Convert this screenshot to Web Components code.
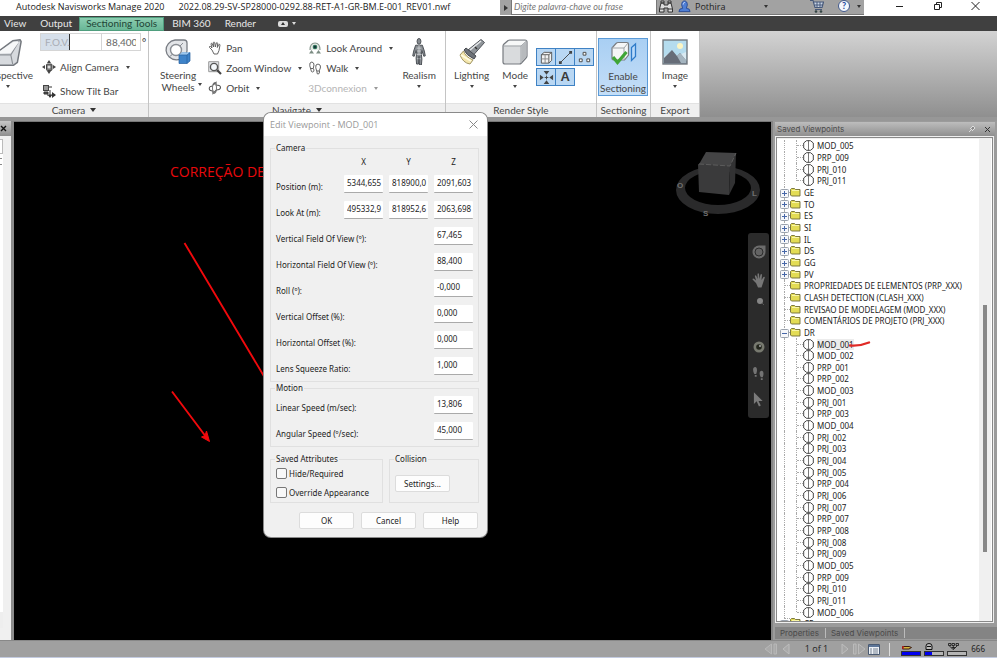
<!DOCTYPE html>
<html lang="pt">
<head>
<meta charset="utf-8">
<title>Autodesk Navisworks Manage 2020</title>
<style>
html,body{margin:0;height:100%}
body{font:10px/12px Lato,"Open Sans",sans-serif;color:#464646;background:#a0a0a0;overflow:hidden}
</style>
</head>
<body>
<nw-app></nw-app>
<script>
const ICONS={
perspective:['0 0 32 28','<path d="M1 17 21 2l8-1 1 2-4 22-4 3H3l-2-4z" fill="#d7dade" stroke="#74787e" stroke-width="1.6" stroke-linejoin="round"/><path d="M2 17h17l9-15M19 17l2 10" fill="none" stroke="#8d9197" stroke-width="1.2"/><path d="M3 16 22 3h6l-9 12z" fill="#f6f7f8"/>'],
align:['0 0 14 14','<rect x="4.500" y="4" width="5.500" height="6.500" rx="1" fill="#777" stroke="#444"/><circle cx="7" cy="7" r="1.500" fill="#ddd"/><path d="M7 0 9 3H5zM7 14l-2-3h4zM0 7l3-2v4zM14 7l-3 2V5z" fill="#444"/>'],
tilt:['0 0 14 14','<rect x="1.500" y="1.500" width="5" height="5" fill="#999" stroke="#444"/><path d="M2 8h4v2H2zM7 3h3M8 6v7M5 11h8" stroke="#333" fill="#555"/><path d="m10 8 4 3-4 3zM8 14l-2-3h4z" fill="#333"/>'],
wheel:['0 0 26 26','<path d="M10 1h9q3 0 3 3v8a10.500 10 0 1 1-12-11z" fill="#e3e5e8" stroke="#787c83" stroke-width="1.300"/><circle cx="11" cy="11" r="5.500" fill="#fff" stroke="#8a8e94" stroke-width="1.400"/><path d="M4 18l4-3M18 4l-3 3" stroke="#8a8e94"/><path d="m14 16 3-2.500h8V22l-3 2.500h-8z" fill="#3e83c9"/><path d="m14 16 3-2.500h8L22 16z" fill="#9cc7ef"/><path d="M22 16h-8v8.500h8V16l3-2.500V22l-3 2.500" fill="none" stroke="#225f9f" stroke-width=".7"/>'],
pan:['0 0 14 14','<path d="M4 9 1.500 6.500q-.5-1.500 1-1L4 7 3 3q.3-1.500 1.300-.3L5.500 6 5.300 1.500q.7-1.300 1.400 0L7.300 6l1-4q1-1 1.400.2L9.300 6.500l1.500-3q1-.7 1.200.5L11 9.500 9.500 13H6z" fill="#fff" stroke="#555" stroke-width=".9"/>'],
zoom:['0 0 14 14','<path d="M.7.700h10v10h-10z" fill="#e3e6e9" stroke="#999"/><circle cx="6" cy="6" r="3.600" fill="#f4f8fb" stroke="#555" stroke-width="1.400"/><path d="m9 9 4 4" stroke="#444" stroke-width="2.200"/>'],
orbit:['0 0 14 14','<path d="M5 4 8 1.500V4c6 0 6 5 0 5M5 5C0 5 0 10 5 10v2.500L8.500 9" fill="none" stroke="#555" stroke-width="1.100"/><ellipse cx="6.500" cy="7" rx="2" ry="5.500" fill="none" stroke="#777"/>'],
look:['0 0 14 14','<path d="M2 9q0-7 5-7t5 7" fill="#e5ebe7" stroke="#8a9a90" stroke-width="1.200"/><circle cx="7" cy="6" r="2.300" fill="#2e7358"/><circle cx="7" cy="6" r="1" fill="#123"/><path d="M1 12.500 3.500 9 6 12.500zM8 12.500 10.500 9l2.500 3.500z" fill="#7d8d84"/>'],
walk:['0 0 14 14','<path d="M2 2q2-2 3.500 0Q6.500 4 5.500 6 5 8 6 9q0 2-1.500 2T3 9Q1 4 2 2zM8 4q2-2 4 0 1 2 0 4-1 1-.5 3 0 2-1.500 2T9 11Q7 6 8 4z" fill="#fff" stroke="#666"/><path d="M2.500 7.500H5M9 10h2.500" stroke="#666"/>'],
realism:['0 0 16 28','<path d="M6 3.500q0-3 2-3t2 3-2 3-2-3zM4.500 7.500h7l2 6 1 5-1.500.5-2-6-.5 4 .5 5-.5 6H8.500L8 19l-.5 8H5.500L5 21l.5-5L5 13l-2 6-1.500-.5 1-5z" fill="#868b90" stroke="#4a4e53"/><path d="M5.500 10.500h5M6 13.500h4M5.500 17h5M6 21.500h1.500M8.500 21.500H10M8 7v10" stroke="#d5d8db" stroke-width=".8"/>'],
lighting:['0 0 28 28','<path d="M10 12 23 1.500l3.500 3L15.500 17z" fill="#8f9499" stroke="#50545a"/><path d="m12 12 11-9" stroke="#e6e8ea" stroke-width="1.600"/><path d="m8 10 10 8-2 3Q8 17 6 12z" fill="#6d7278" stroke="#484b50"/><path d="M5.500 13q2 6 9.500 9l-3 4Q5 25 2 17z" fill="#f5e7ad" stroke="#a09565"/><path d="m3 17 10 6" stroke="#fffbe0" stroke-width="2"/><path d="m17 9 2 2" stroke="#333" stroke-width="1.500"/>'],
mode:['0 0 26 26','<path d="M1 7q0-1 1-2l4-3.500Q7 1 8 1h15q2 0 2 2v14q0 1-1 2l-4.500 5q-1 1-2 1H3q-2 0-2-2z" fill="#d9dbdd" stroke="#777b80" stroke-width="1.200"/><path d="M2 6.500 7 2h17l-5 4.500z" fill="#f7f8f8"/><path d="M2 7h17v17M19 7l5.500-5" fill="none" stroke="#a2a6aa"/><path d="m19.500 7 5-4.500V17l-5 6z" fill="#b7babd"/>'],
t1:['0 0 16 16','<path d="m2.500 5 3-2.500h8V11l-3 3h-8zM2.500 5h8v9M10.500 5l3-2.500" fill="#f2f2f2" stroke="#555"/><path d="M2.500 9.500h8M6.500 5v9" stroke="#888"/>'],
t2:['0 0 16 16','<path d="M2.500 13.500 13.500 2.500" stroke="#444"/><path d="M1 12h3v3H1zM12 1h3v3h-3z" fill="#444"/>'],
t3:['0 0 16 16','<path d="M6.500 2.500h3v3h-3zM2.500 9.500h3v3h-3zM10.500 9.500h3v3h-3z" fill="#fff" stroke="#444"/>'],
t4:['0 0 16 16','<path d="M5 1h6L8 5zM5 15h6l-3-4zM1 5l4 3-4 3zM15 5l-4 3 4 3z" fill="#444"/><path d="M8 6v4M6 8h4" stroke="#444"/>'],
section:['0 0 28 26','<path d="M3 8 7 3.500q1-1 2-1h9q1.500 0 1.500 1.500v11l-4 5H4.500Q3 20 3 18.500z" fill="#f5f6f7" stroke="#7a7e83" stroke-width="1.200"/><path d="M3 8h12v11M15 8l4-5" fill="none" stroke="#a0a4a8"/><path d="M22.500 7.500 26.500 4v12.500l-4 4z" fill="#b9dafa" stroke="#2e7bc9" stroke-width="1.300"/><path d="m4 17 4.500 5.500L17.500 12" fill="none" stroke="#3fa535" stroke-width="3.200"/>'],
image:['0 0 26 26','<rect x="1" y="1" width="24" height="24" fill="#b5dcee" stroke="#74797f" stroke-width="1.400"/><circle cx="18" cy="7" r="3" fill="#fdf6c4"/><path d="M2 18q6-6 9-3t13-2v11H2z" fill="#d9eaf2"/><path d="m2 19 8-8 5 6 3-3 6.500 8v2.500H2z" fill="#676d78"/><path d="m15 17 3-3 6 7v3h-5z" fill="#a5b5c0"/>'],
binoc:['0 0 14 13','<path d="M2 3h3v2h4V3h3l1.500 6v3H9V8H5v4H.5V9zM2 1h3v2H2zM9 1h3v2H9z" fill="#ddd" stroke="#333"/><path d="M1 9h4M9 9h4" stroke="#333"/>'],
user:['0 0 14 14','<path d="M1 12.500Q1 9 5 9L4 5.500Q4 1 7 1t3 4.500L9 9q4 0 4 3.500z" fill="#4f7fd6" stroke="#274a94"/><path d="M5.500 5q0-2.500 2-2.500" stroke="#bcd2fa" fill="none"/>'],
cart:['0 0 14 14','<path d="M0 1.500h3L5 8.500h7L13.500 3H4" fill="#c9d5e6" stroke="#47597a" stroke-width="1.200"/><path d="M5 6h8M5 10.500h7M7 3v5M10 3v5" stroke="#47597a"/><circle cx="6" cy="12.500" r="1.300" fill="#344"/><circle cx="11" cy="12.500" r="1.300" fill="#344"/>'],
folder:['0 0 11 9','<path d="M.5 1.500 1.500.500h3l1 1h4.500v6.500H1.500L.5 7z" fill="#e3dc55" stroke="#6f6c35" stroke-width=".9"/><path d="M2 2.500h7" stroke="#f8f5a8"/>'],
view:['0 0 11 11','<path d="M3.500.7h4L10.300 3v5L7.500 10.300h-4L.7 8V3z" fill="#fff" stroke="#333" stroke-width=".9"/><path d="M5.500 0v11" stroke="#555" stroke-width=".8"/>'],
plus:['0 0 9 9','<rect x=".5" y=".5" width="8" height="8" rx="1" fill="#f6f7fa" stroke="#9ba3ae"/><path d="M2 4.500h5M4.500 2v5" stroke="#4667a8"/>'],
minus:['0 0 9 9','<rect x=".5" y=".5" width="8" height="8" rx="1" fill="#f6f7fa" stroke="#9ba3ae"/><path d="M2 4.500h5" stroke="#4667a8"/>'],
nwheel:['0 0 14 14','<path d="M7 .5h6.500V7A6.500 6.500 0 1 1 7 .5z" fill="#6c6c6c"/><circle cx="7" cy="7" r="4" fill="#646464" stroke="#2c2c2c"/>'],
nhand:['0 0 14 15','<path d="M4 10 .5 6.500q0-1.500 1.500-.7L4 7.500 2.800 3q.5-1.500 1.500-.2L5.700 6 5.500 1q.8-1.300 1.500 0L7.500 6l1-4.500q1-1 1.500.3L9.500 7l2-3q1.200-.7 1.300.6L11 10l-1.500 4.500H6z" fill="#777"/>'],
nzoom:['0 0 10 10','<circle cx="6" cy="5" r="3" fill="#858585"/><path d="m8 7 2 2" stroke="#555"/>'],
neye:['0 0 14 14','<circle cx="7" cy="7" r="5.500" fill="#77796f"/><circle cx="7" cy="7" r="2.800" fill="#23261d"/><circle cx="8" cy="6" r="1" fill="#aaa"/>'],
nfeet:['0 0 14 16','<path d="M1.500 2q2-2 3.500 0 1 3-.5 6.500H2.500Q.5 5 1.500 2zM8.500 6q2-2 3.500 0 1 3-.5 6h-2Q7.500 9 8.500 6zM3 9.500h2v2H3zM9.500 13h2v2h-2z" fill="#747474"/>'],
narrow:['0 0 12 16','<path d="M1 0v13l3-3 2.500 5.500 2-1L6 9.500h4.500z" fill="#7b7b7b"/>'],
first:['0 0 14 12','<path d="M7.500 1v10L1 6zM10 1h2.500v10H10z" fill="#a9a9a9" stroke="#b8b8b8"/>'],
prev:['0 0 8 12','<path d="M7 1v10L1 6z" fill="#a9a9a9" stroke="#bdbdbd"/>'],
next:['0 0 8 12','<path d="M1 1v10l6-5z" fill="#a6a6a6" stroke="#bdbdbd"/>'],
last:['0 0 14 12','<path d="M6.500 1v10L13 6zM1.500 1H4v10H1.500z" fill="#a6a6a6" stroke="#bbb"/>'],
sheet:['0 0 12 11','<path d="M.5.500h11v10H.5z" fill="#eef2f7" stroke="#4a5a72"/><path d="M1 2h10" stroke="#5d7699" stroke-width="2"/><path d="M2 5h2M2 7h2M2 9h2M5 5h5M5 7h5M5 9h5" stroke="#56657a" stroke-width=".8"/>'],
pencil:['0 0 10 5','<path d="M.5 1.500h6.500l2.500 1-2.500 1.500H.5z" fill="#d7b93e" stroke="#3b1b10"/><path d="M1 1v3" stroke="#b22" stroke-width="1.500"/>'],
disk:['0 0 8 7','<path d="M1 3q0-2.500 3-2.500T7 3v3.500H1z" fill="#bbb" stroke="#111"/><path d="M2 3.500h4" stroke="#111"/>'],
net:['0 0 11 7','<path d="M.5.500h2.500v2H.5zM4 .5h2.500v2H4zM8 .5h2.500v2H8zM1.500 3 5 6.500M5.300 3v3.500M9 3 5.500 6.500M3.500 4.500h4" fill="none" stroke="#111" stroke-width=".8"/>'],
};
function ic(n,w,h){const i=ICONS[n];return `<svg aria-hidden="true" width="${w}" height="${h||w}" viewBox="${i[0]}">${i[1]}</svg>`}
const BASE=`*{box-sizing:border-box}svg{display:block;flex:none}button,input{font:inherit;color:inherit;margin:0}button{background:none;border:0;padding:0;white-space:nowrap}`;
function define(name,css,html){
  const t=document.createElement('template');
  t.innerHTML=`<style>${BASE}${css}</style>`;
  customElements.define(name,class extends HTMLElement{
    constructor(){super();const r=this.attachShadow({mode:'open'});r.append(t.content.cloneNode(true));}
    connectedCallback(){if(this.done)return;this.done=true;const d=document.createElement('template');d.innerHTML=typeof html==='function'?html(this):html;this.shadowRoot.append(d.content);}
  });
}

/* Ribbon button: "big" puts the icon above the label, otherwise beside it. */
define('nw-tool',`
:host{display:block}
button{display:flex;align-items:center;gap:4px;height:20px;line-height:12px}
.car{width:0;height:0;border:2px solid transparent;border-top:3px solid #444;border-bottom:0;margin-left:3px}
:host([big]) button{flex-direction:column;height:auto;gap:4px;padding:2px 2px 3px;min-width:38px}
:host([big]) .ic{height:27px;display:flex;align-items:center}
:host([big]) .car{margin:0}
:host([on]) button{background:linear-gradient(#a9cff3,#c4def7);border:1px solid #5b9bd8;width:50px;height:58px;padding-top:1px}
:host([off]) button{color:#b5b5b5}
:host([off]) .car{border-top-color:#999}`,
e=>{const n=e.getAttribute('icon');return `<button type="button">${n?`<span class="ic">${ic(n,+e.getAttribute('w')||14,+e.getAttribute('h')||+e.getAttribute('w')||14)}</span>`:''}<span><slot></slot></span>${e.hasAttribute('menu')?'<i class="car"></i>':''}</button>`});

define('nw-panel',`
:host{display:flex;flex-direction:column;border-right:1px solid #c4c4c4;background:#fff;flex:none}
.body{flex:1;display:flex;padding:5px 0 0}
.cap{height:14px;line-height:12px;padding-bottom:1px;background:#efefef;border-top:1px solid #e2e2e2;display:flex;justify-content:center;align-items:center;gap:5px}
.cap i{border:3px solid transparent;border-top:4px solid #333;border-bottom:0}`,
e=>`<div class="body"><slot></slot></div><div class="cap">${e.getAttribute('label')}${e.hasAttribute('menu')?'<i></i>':''}</div>`);

define('nw-titlebar',`
:host{display:flex;align-items:stretch;height:16px;background:#fff;color:#222;font:9px/13px "Open Sans",sans-serif}
h1{font:inherit;margin:0 0 0 16px;flex:1;display:flex;gap:14px;white-space:nowrap}
.exp{width:11px;height:15px;background:#a2a2a2;display:flex;align-items:center;justify-content:center}
.exp i{border:3px solid transparent;border-left:4px solid #333;border-right:0}
input{width:146px;height:15px;border:1px solid #777;border-top:0;font:italic 9px/12px Lato,sans-serif;padding:0 2px 2px;background:#fff}
input::placeholder{color:#777;opacity:1}
.acc{height:15px;width:207px;background:#a2a2a2;display:flex;align-items:center;padding:0 3px 2px 2px;border-bottom:1px solid #777}
.acc span{margin-left:4px;flex:0 0 69px}.acc i{border:2px solid transparent;border-top:3px solid #333;border-bottom:0}
.q{width:12px;height:12px;border-radius:6px;background:#f4f7fc;border:1px solid #41598c;color:#23489c;font:bold 9px/10px Lato,sans-serif;text-align:center}
.win{width:133px;display:flex;justify-content:space-between;align-items:flex-start;padding:1px 17px 0 31px}`,
`<h1><span>Autodesk Navisworks Manage 2020</span><span>2022.08.29-SV-SP28000-0292.88-RET-A1-GR-BM.E-001_REV01.nwf</span></h1>
<div class="exp"><i></i></div><input type="text" aria-label="Pesquisa" placeholder="Digite palavra-chave ou frase">
<div class="acc">${ic('binoc',14,13)}<b style="width:5px"></b>${ic('user',13)}<span>Pothira</span><i></i><b style="flex:1"></b>${ic('cart',14)}<b style="width:14px"></b><button class="q" aria-label="Ajuda">?</button><b style="width:7px"></b><i></i></div>
<div class="win"><button aria-label="Minimizar"><svg width="9" height="10" viewBox="0 0 9 10"><path d="M1 5.500h7" stroke="#222"/></svg></button>
<button aria-label="Restaurar"><svg width="9" height="10" viewBox="0 0 9 10"><path d="M1.500 3.500h5v5h-5zM3.500 3V1.500h5v5H7" fill="none" stroke="#222"/></svg></button>
<button aria-label="Fechar"><svg width="9" height="10" viewBox="0 0 9 10"><path d="m.5 1 8 8M8.500 1l-8 8" stroke="#222"/></svg></button></div>`);

define('nw-tabs',`
:host{display:flex;align-items:center;height:15px;background:#404040;color:#e8e8e8;padding:0 0 0 4px}
button{height:14px;line-height:13px;margin-right:14px}
button[aria-selected=true]{background:linear-gradient(#8fcfb3,#66b594);color:#1e4536;padding:0 7px;margin:0 8px 0 -7px;outline:1px solid #4f9e7e;outline-offset:-1px}
.m{background:#ddd;width:10px;height:6px;border-radius:2px;display:block;margin-left:8px}
.m i{display:block;width:0;border:2px solid transparent;border-bottom:3px solid #333;border-top:0;margin:1px auto 0}
.c{border:2px solid transparent;border-top:3px solid #ddd;border-bottom:0;margin-left:4px}`,
`<button>View</button><button>Output</button><button aria-selected="true">Sectioning Tools</button><button>BIM 360</button><button>Render</button><span class="m"><i></i></span><i class="c"></i>`);

define('nw-ribbon',`
:host{display:flex;height:86px;background:linear-gradient(#d3d3d3,#8f8f8f)}
.col{display:flex;flex-direction:column}
.p1{width:149px}.p2{width:297px}.p3{width:151px}.p4{width:54px}.p5{width:49px}
.persp{margin-left:-20px;margin-right:7px}
.fov{display:flex;height:18px;margin:-4px 0 6px -2px;align-items:center;color:#666}
.fov input{height:18px;border:1px solid #d5d5d5;padding:0 4px;background:#fff}
.fov .a{width:62px;color:#a9adb5;background:linear-gradient(90deg,#d6dfea 28px,#333 28px 29px,#fff 29px)}
.fov .b{width:39px;border-left:0;padding:0 4px}
.g{display:grid;grid-template-columns:19px 19px 19px;grid-auto-rows:18px;row-gap:2px;margin:12px 0 0 2px;height:38px}
.g button{border:1px solid #3f82c4;background:#b9d7f3;display:grid;place-items:center;margin-right:-1px;font:bold 13px/14px "Liberation Sans",sans-serif;color:#3a3a3a}
.w{display:flex;align-items:flex-start}
.w i{border:2px solid transparent;border-top:3px solid #444;border-bottom:0;margin:47px -3px 0 0}`,
`<nw-panel class="p1" label="Camera" menu><nw-tool class="persp" big menu icon="perspective" w="30" h="28">Perspective</nw-tool>
<div class="col" style="padding-top:1px"><div class="fov"><input class="a" aria-label="Campo" value="F.O.V."><input class="b" aria-label="F.O.V." value="88,400"><span style="margin-left:1px;color:#222">°</span></div>
<nw-tool icon="align" menu>Align Camera</nw-tool><b style="height:4px"></b><nw-tool icon="tilt">Show Tilt Bar</nw-tool></div></nw-panel>
<nw-panel class="p2" label="Navigate" menu><div class="w"><nw-tool style="margin-left:9px" big icon="wheel" w="26">Steering<br>Wheels</nw-tool><i></i></div>
<div class="col" style="padding:2px 0 0 9px;width:109px"><nw-tool icon="pan">Pan</nw-tool><nw-tool icon="zoom" menu>Zoom Window</nw-tool><nw-tool icon="orbit" menu>Orbit</nw-tool></div>
<div class="col" style="padding:2px 0 0 0;width:91px"><nw-tool icon="look" menu>Look Around</nw-tool><nw-tool icon="walk" menu>Walk</nw-tool><nw-tool off menu>3Dconnexion</nw-tool></div>
<nw-tool style="margin-left:1px" big menu icon="realism" w="16" h="27">Realism</nw-tool></nw-panel>
<nw-panel class="p3" label="Render Style"><nw-tool style="margin-left:6px" big menu icon="lighting" w="28">Lighting</nw-tool><nw-tool style="margin-left:5px" big menu icon="mode" w="26">Mode</nw-tool>
<div class="g"><button aria-label="Surfaces">${ic('t1',15)}</button><button aria-label="Lines">${ic('t2',15)}</button><button aria-label="Points">${ic('t3',15)}</button><button aria-label="Snap Points">${ic('t4',15)}</button><button aria-label="Text">A</button></div></nw-panel>
<nw-panel class="p4" label="Sectioning"><nw-tool style="margin:2px 0 0 1px" big on icon="section" w="28" h="26">Enable<br>Sectioning</nw-tool></nw-panel>
<nw-panel class="p5" label="Export"><nw-tool style="margin:0 auto" big menu icon="image" w="26">Image</nw-tool></nw-panel>`);

define('nw-leftdock',`
:host{display:flex;flex-direction:column;width:14px;background:#f0f0f0;border-right:3px solid #8c8c8c}
.h{height:15px;background:linear-gradient(#c6c6c6,#8e8e8e);display:flex;align-items:center}
.b{width:3px;flex:1;display:flex;flex-direction:column;background:#fff;margin:3px 0 12px}
.b i{display:block}`,
`<div class="h"><button aria-label="Fechar painel"><svg width="7" height="7" viewBox="0 0 7 7"><path d="m1 1 5 5M6 1 1 6" stroke="#111" stroke-width="1.400"/></svg></button></div>
<div class="b"><i style="height:15px;border:1px solid #bbb;border-left:0"></i><i style="height:4px"></i><i style="height:7px;border:solid #888;border-width:1px 0;width:2px"></i><b style="flex:1"></b><i style="height:16px;background:#eee"></i></div>`);

define('nw-navbar',`
:host{display:flex;flex-direction:column;align-items:center;width:21px;background:#2b2b2b;border-radius:3px;padding:12px 0 11px}`,
`${ic('nwheel',14)}<b style="height:14px"></b>${ic('nhand',14,15)}<b style="height:8px"></b>${ic('nzoom',10)}<b style="height:34px"></b>${ic('neye',14)}<b style="height:12px"></b>${ic('nfeet',13,15)}<b style="height:11px"></b>${ic('narrow',11,15)}`);

define('nw-viewport',`
:host{display:block;position:relative;flex:1;background:#000;overflow:hidden;border-top:1px solid #777}
.mark{position:absolute;left:0;top:0}
.note{position:absolute;left:156px;top:40px;font:14px/20px "Open Sans",sans-serif;color:#e8090c;white-space:nowrap;margin:0}
.cube{position:absolute;right:8px;top:25px}
nw-navbar{position:absolute;right:2px;top:111px}`,
`<p class="note">CORREÇÃO DE</p>
<svg class="mark" width="260" height="340" viewBox="0 0 260 340" fill="none" stroke="#f0090c" stroke-width="1.900"><path d="m170.500 121 85 142.500M158 269.500l36 48"/><path d="m195.500 319.500-8-4.500 3.500-1.500 1.500-4.500z" fill="#f0090c" stroke="#f0090c" stroke-width="1"/></svg>
<svg class="cube" width="90" height="70" viewBox="0 0 90 70"><path fill-rule="evenodd" d="M3 43a42 24 0 1 1 84 0 42 24 0 1 1-84 0zm9-2a33 17 0 1 0 66 0 33 17 0 1 0-66 0z" fill="#2a2a2b"/><path d="m33 5 30 1-3 14-35-1z" fill="#444445"/><path d="m25 17 32 2-1 29-30-3z" fill="#3a3a3b"/><path d="M57 19 63 6l-1 30-6 12z" fill="#323233"/><path d="m26 17 31 2 6-13" stroke="#5c5c5c" fill="none" stroke-dasharray="5 2"/><g fill="#707070" font-family="Liberation Sans" font-size="8" font-weight="bold"><text x="4" y="41">O</text><text x="79" y="49">L</text><text x="30" y="69">S</text></g></svg>
<nw-navbar></nw-navbar>`);

const kids=["MOD_001","MOD_002","PRP_001","PRP_002","MOD_003","PRJ_001","PRP_003","MOD_004","PRJ_002","PRJ_003","PRJ_004","PRJ_005","PRP_004","PRJ_006","PRJ_007","PRP_007","PRP_008","PRJ_008","PRJ_009","MOD_005","PRP_009","PRJ_010","PRJ_011","MOD_006"];
const leaf=(t,i,a)=>`<li class="l2${i===a.length-1?' end':''}"><i class="v"></i><i class="v w"></i><i class="h"></i>${ic('view',11)}<span class="${t==='MOD_001'?'sel':''}">${t}${t==='MOD_001'?'<svg class="pen" width="22" height="7" viewBox="0 0 22 7"><path d="M1 4.500q9 1 19-3" fill="none" stroke="#e02a26" stroke-width="2.300" stroke-linecap="round"/></svg>':''}</span></li>`;
const dir=(t,x)=>`<li class="l1"><i class="v"></i><i class="h"></i>${x?`<em>${ic(x,9)}</em>`:''}${ic('folder',11,9)}<span>${t}</span></li>`;

define('nw-saved',`
:host{display:flex;flex-direction:column;width:226px;background:#9b9b9b;border-left:2px solid #858585;padding:1px 0 0 2px;font:8px/11px "Noto Sans","DejaVu Sans Condensed",sans-serif;color:#222}
header{height:14px;background:linear-gradient(#bdbdbd,#8f8f8f);display:flex;align-items:center;gap:8px;padding:0 4px 0 2px;margin-right:2px;color:#4c4c4c;font-family:Inter,sans-serif}
header span{flex:1}
.box{flex:1;display:flex;background:#fff;border:2px solid #efefef;border-top-width:3px;margin-right:3px;outline:1px solid #888;outline-offset:-2px;padding:0 1px 0 1px;min-height:0}
ul{list-style:none;margin:0;padding:1px 0 0;flex:1;display:grid;grid-template-rows:repeat(41,1fr) 3px;min-height:0}
li{display:flex;align-items:center;min-height:0;position:relative;padding-left:6px;white-space:nowrap}
li:last-child{overflow:hidden;align-items:flex-start}
.v{align-self:stretch;width:6px;border-left:1px dotted #aaa}
.l2 .v{width:12px}.l2 .v.w{width:1px}
.end .v.w{height:50%}
.h{border-top:1px dotted #aaa;width:6px}
.l1 .h{margin-left:-6px}
.l1 svg{position:relative}
em{position:absolute;left:2px;top:2px}
span{margin-left:3px;position:relative}
.sel{background:#ececec}
.pen{position:absolute;left:32px;top:2px}
.sb{width:12px;background:#f0f0f0;display:flex;flex-direction:column;align-items:center}
.sb i{width:4px;background:#888;flex:248}
.tabs{height:12px;background:#848484;display:flex;align-items:center;margin:4px 0 1px;padding-left:4px;color:#4a4a4a;font-family:Inter,sans-serif}
.tabs button{padding:0 6px 0 1px;border-right:1px solid #bbb;margin-right:4px;line-height:10px}`,
`<header><span style="margin:0">Saved Viewpoints</span><svg width="8" height="8" viewBox="0 0 8 8"><path d="M1 7l2-2M2 3l3 3M3 3l2-2 2 2-2 2" stroke="#ddd" fill="#888"/></svg><button aria-label="Fechar"><svg width="7" height="7" viewBox="0 0 7 7"><path d="m1 1 5 5M6 1 1 6" stroke="#333"/></svg></button></header>
<div class="box"><ul>${["MOD_005","PRP_009","PRJ_010","PRJ_011"].map(leaf).join('')}${["GE","TO","ES","SI","IL","DS","GG","PV"].map(t=>dir(t,'plus')).join('')}${["PROPRIEDADES DE ELEMENTOS (PRP_XXX)","CLASH DETECTION (CLASH_XXX)","REVISAO DE MODELAGEM (MOD_XXX)","COMENTÁRIOS DE PROJETO (PRJ_XXX)"].map(t=>dir(t)).join('')}${dir("DR",'minus')}${kids.map(leaf).join('')}${dir("CE",'plus')}</ul>
<div class="sb"><b style="flex:166"></b><i></i><b style="flex:69"></b></div></div>
<div class="tabs"><button>Properties</button><button>Saved Viewpoints</button></div>`);

define('nw-status',`
:host{display:flex;align-items:center;height:18px;background:#a0a0a0;border-bottom:1px solid #c3cbe0;justify-content:flex-end;padding-right:12px;color:#222;border-top:1px solid #888}
.m{width:20px;display:flex;flex-direction:column;gap:1px;margin-right:3px;height:13px;justify-content:flex-end}
.m i{height:5px;border:1px solid #333;background:#b5b5b5}
.m svg{margin-left:1px}
.s{width:1px;height:13px;background:#ddd;margin:0 11px 0 9px}
.n{margin:0 13px 0 15px;font:9px/12px "Open Sans",sans-serif}`,
`${ic('first',14,12)}<b style="width:4px"></b>${ic('prev',8,12)}<span class="n">1 of 1</span>${ic('next',8,12)}<b style="width:3px"></b>${ic('last',14,12)}<b style="width:2px"></b>${ic('sheet',12,11)}<i class="s"></i>
<span class="m">${ic('pencil',10,5)}<i style="background:#0000f0"></i></span><span class="m">${ic('disk',8,7)}<i style="background:linear-gradient(90deg,#0000f0 7px,#b5b5b5 7px)"></i></span><span class="m">${ic('net',11,7)}<i></i></span><span style="margin-left:1px;font:8px/10px 'Noto Sans',sans-serif">666</span>`);

/* A labelled numeric row; the values attribute separates its fields with "|". */
define('nw-row',`
:host{display:flex;height:26px;align-items:flex-start;gap:6px}
label{flex:1;padding-top:6px;white-space:nowrap}
input{width:39px;height:18px;border:0;border-bottom:1px solid #aaa;background:#fff;padding:0 0 3px 3px;border-radius:1px}`,
e=>{const v=e.getAttribute('values').split('|'),l=e.getAttribute('label');return `<label for="f0">${l}</label>`+v.map((x,i)=>`<input type="text" id="f${i}" value="${x}"${i?` aria-label="${l} ${'XYZ'[i]}"`:''}>`).join('')});

define('nw-group',`
:host{display:block}
fieldset{border:1px solid #e0e0e0;margin:0;padding:0 5px;min-width:0;height:100%}
legend{padding:0 1px;margin-left:-1px;line-height:10px}
::slotted(nw-row:last-child){height:24px}`,
e=>`<fieldset><legend>${e.getAttribute('label')}</legend><slot></slot></fieldset>`);

define('nw-dialog',`
:host{display:block;width:223px;background:#f0f0f0;border-radius:7px;overflow:hidden;font:8px/11px "Noto Sans","DejaVu Sans Condensed",sans-serif;color:#1c1c1c;box-shadow:0 0 0 1px #8a8a8a}
header{height:23px;background:#fff;display:flex;align-items:center;justify-content:space-between;padding:0 9px 0 6px;color:#999;font:9px/12px "Open Sans",sans-serif}
.in{padding:7px 8px 8px 6px;display:flex;flex-direction:column}
.xyz{display:flex;justify-content:flex-end;gap:6px;height:22px;padding-top:3px}
.xyz span{width:39px;text-align:center}
.two{display:grid;grid-template-columns:113px 1fr;gap:6px;margin-top:7px}
.chk{display:flex;align-items:center;gap:2px;height:19px}
.chk input{appearance:none;width:11px;height:11px;border:1px solid #777;border-radius:2px;background:#f8f8f8}
.bt{display:flex;justify-content:flex-end;gap:7px;margin:9px 1px 0 0}
.b{background:#fdfdfd;border:1px solid #dcdcdc;border-radius:2px;width:55px;height:17px}`,
`<header><span>Edit Viewpoint - MOD_001</span><button aria-label="Fechar"><svg width="9" height="9" viewBox="0 0 9 9"><path d="m.5.500 8 8M8.500.500l-8 8" stroke="#888"/></svg></button></header>
<div class="in"><nw-group label="Camera"><div class="xyz"><span>X</span><span>Y</span><span>Z</span></div>
<nw-row label="Position (m):" values="5344,655|818900,0|2091,603"></nw-row><nw-row label="Look At (m):" values="495332,9|818952,6|2063,698"></nw-row><nw-row label="Vertical Field Of View (º):" values="67,465"></nw-row><nw-row label="Horizontal Field Of View (º):" values="88,400"></nw-row><nw-row label="Roll (º):" values="-0,000"></nw-row><nw-row label="Vertical Offset (%):" values="0,000"></nw-row><nw-row label="Horizontal Offset (%):" values="0,000"></nw-row><nw-row label="Lens Squeeze Ratio:" values="1,000"></nw-row></nw-group>
<nw-group label="Motion" style="margin-top:1px"><b style="display:block;height:3px"></b><nw-row label="Linear Speed (m/sec):" values="13,806"></nw-row><nw-row label="Angular Speed (º/sec):" values="45,000"></nw-row></nw-group>
<div class="two"><nw-group label="Saved Attributes"><label class="chk"><input type="checkbox">Hide/Required</label><label class="chk"><input type="checkbox">Override Appearance</label></nw-group>
<nw-group label="Collision"><button class="b" style="margin-top:11px">Settings...</button></nw-group></div>
<div class="bt"><button class="b">OK</button><button class="b">Cancel</button><button class="b">Help</button></div></div>`);

define('nw-app',`
:host{display:flex;flex-direction:column;height:100vh;position:relative}
main{flex:1;display:flex;min-height:0;border-top:4px solid #979797}
nw-dialog{position:absolute;left:264px;top:113px}`,
`<nw-titlebar></nw-titlebar><nw-tabs></nw-tabs><nw-ribbon></nw-ribbon>
<main><nw-leftdock></nw-leftdock><nw-viewport></nw-viewport><nw-saved></nw-saved></main>
<nw-status></nw-status><nw-dialog role="dialog" aria-label="Edit Viewpoint"></nw-dialog>`);
</script>
</body>
</html>
